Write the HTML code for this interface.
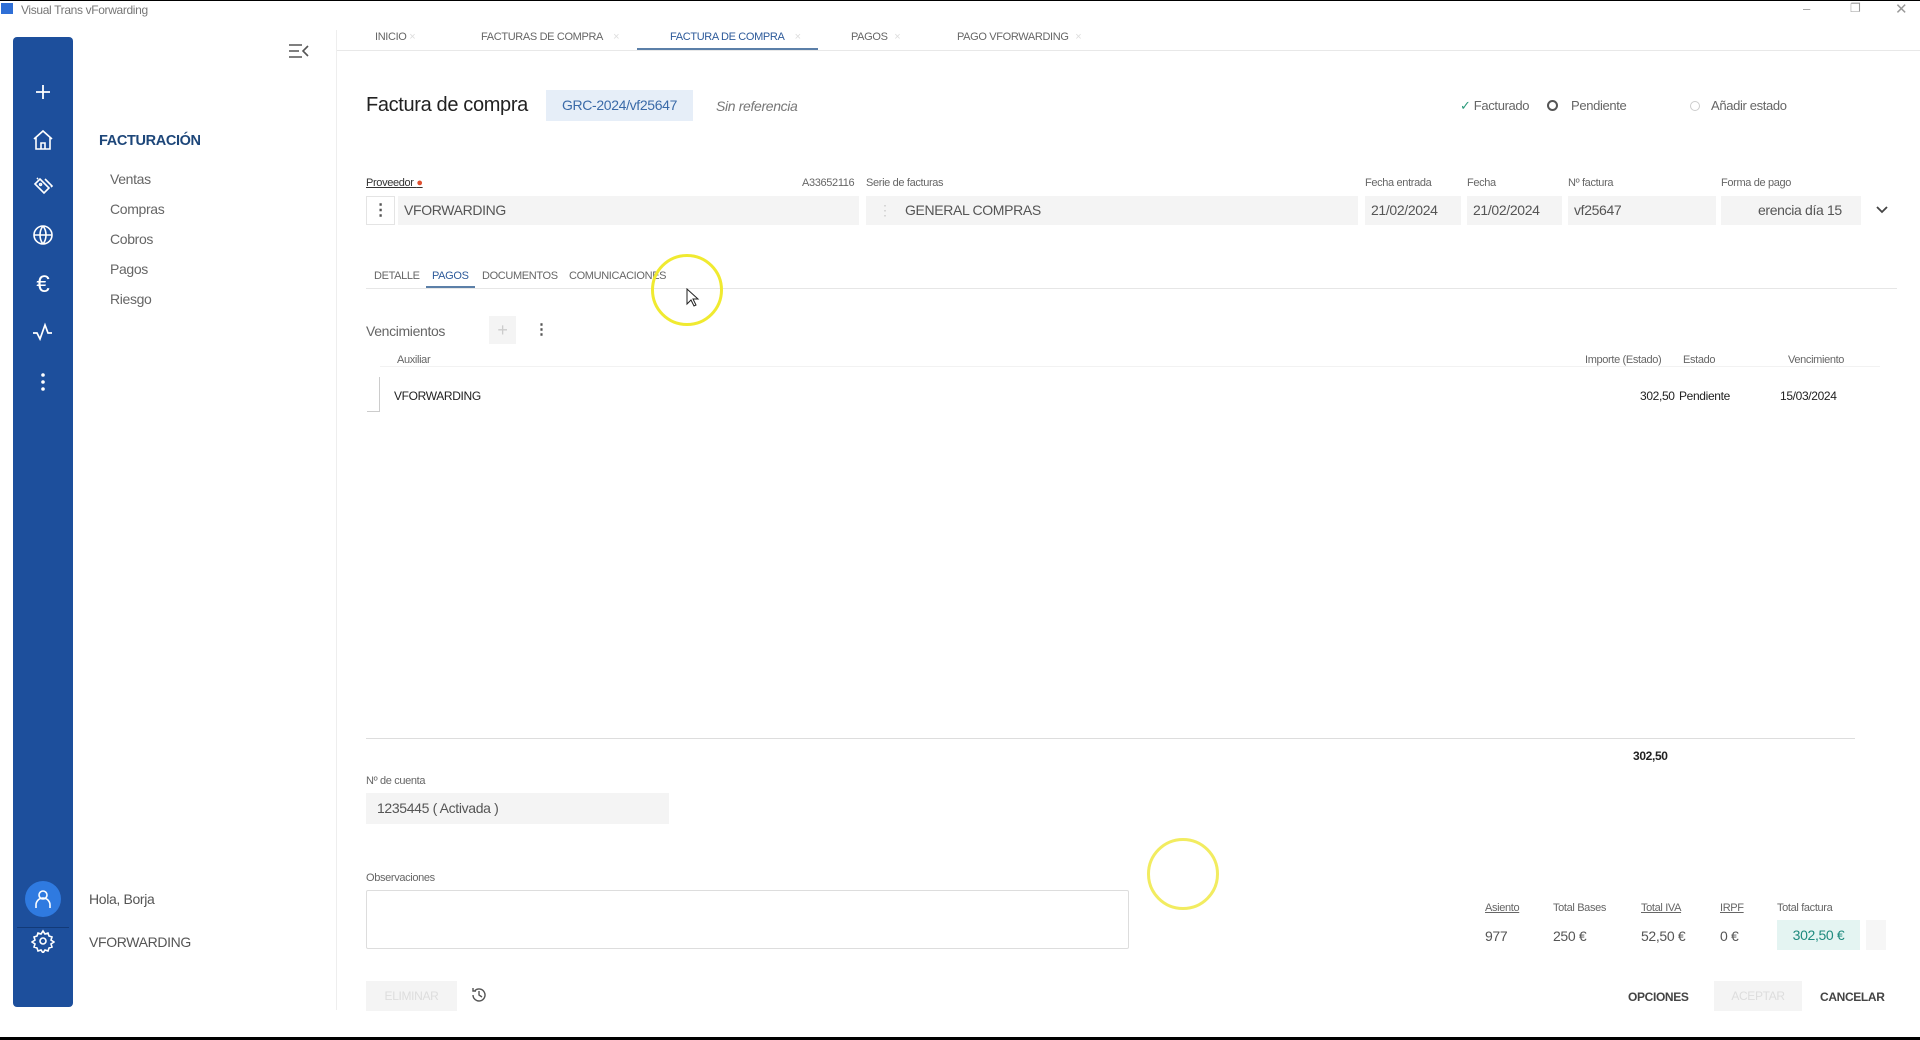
<!DOCTYPE html>
<html><head><meta charset="utf-8"><style>
*{margin:0;padding:0;box-sizing:border-box}
body{width:1920px;height:1040px;background:#fff;font-family:"Liberation Sans",sans-serif;color:#444;position:relative;overflow:hidden;letter-spacing:-0.35px}
.a{position:absolute;white-space:nowrap}
.side{left:13px;top:37px;width:60px;height:970px;background:#1d4f9c;border-radius:4px}
.ic{position:absolute;left:31px;width:24px;height:24px}
.t{font-size:12px;color:#666}
.lbl{font-size:11px;color:#666}
.inp{background:#f4f4f4;height:29px;top:196px;font-size:14px;color:#555;line-height:29px;padding-left:6px}
</style></head><body>
<div class="a" style="left:0;top:0;width:1920px;height:1px;background:#000"></div>
<div class="a" style="left:0;top:1037px;width:1920px;height:3px;background:#000"></div>
<div class="a" style="left:1px;top:3px;width:12px;height:11px;background:#2f6fd6"></div>
<div class="a" style="left:21px;top:3px;font-size:12px;color:#777">Visual Trans vForwarding</div>
<div class="a" style="left:1803px;top:1px;font-size:13px;color:#999">–</div>
<div class="a" style="left:1850px;top:1px;font-size:12px;color:#999">❐</div>
<div class="a" style="left:1895px;top:0px;font-size:15px;color:#999">✕</div>

<div class="a side"></div>
<svg class="ic" style="top:80px" viewBox="0 0 24 24" fill="none" stroke="#fff" stroke-width="1.8"><path d="M12 5v14M5 12h14"/></svg>
<svg class="ic" style="top:128px" viewBox="0 0 24 24" fill="none" stroke="#fff" stroke-width="1.6"><path d="M3 11L12 3l9 8M5 9.5V21h14V9.5M10 21v-6h4v6"/></svg>
<svg class="ic" style="top:175px" viewBox="0 0 24 24" fill="none" stroke="#fff" stroke-width="1.6"><path d="M4 9l5-5 9 9-5 5-9-9zM6 4l1-1M9.5 8.5a1 1 0 1 0 .1 0M14 4l7 7-1 1"/></svg>
<svg class="ic" style="top:223px" viewBox="0 0 24 24" fill="none" stroke="#fff" stroke-width="1.6"><circle cx="12" cy="12" r="9"/><path d="M3 12h18M12 3c-4 5-4 13 0 18M12 3c4 5 4 13 0 18"/></svg>
<div class="a" style="left:31px;top:271px;width:24px;text-align:center;font-size:24px;color:#fff;letter-spacing:0;font-weight:300">€</div>
<svg class="ic" style="top:320px" viewBox="0 0 24 24" fill="none" stroke="#fff" stroke-width="1.7"><path d="M2 13h4l3 6 5-14 3 8h4"/></svg>
<svg class="ic" style="top:370px" viewBox="0 0 24 24" fill="#fff"><circle cx="12" cy="5" r="1.8"/><circle cx="12" cy="12" r="1.8"/><circle cx="12" cy="19" r="1.8"/></svg>
<div class="a" style="left:25px;top:881px;width:36px;height:36px;border-radius:50%;background:#2f7ae0"></div>
<svg class="ic" style="top:887px" viewBox="0 0 24 24" fill="none" stroke="#fff" stroke-width="1.6"><circle cx="12" cy="8" r="4"/><path d="M5 21v-3a5 5 0 0 1 14 0v3"/></svg>
<div class="a" style="left:17px;top:927px;width:52px;height:1px;background:#123a78"></div>
<svg class="ic" style="top:929px" viewBox="0 0 24 24" fill="none" stroke="#fff" stroke-width="1.6"><circle cx="12" cy="12" r="3"/><path d="M12 2l2 3 3-1 1 3 3 1-1 3 3 2-3 2 1 3-3 1-1 3-3-1-2 3-2-3-3 1-1-3-3-1 1-3-3-2 3-2-1-3 3-1 1-3 3 1z"/></svg>

<svg class="a" style="left:288px;top:42px" width="22" height="18" viewBox="0 0 22 18" fill="none" stroke="#555" stroke-width="1.6"><path d="M1 3h13M1 9h10M1 15h13M20 4l-5 5 5 5"/></svg>
<div class="a" style="left:99px;top:133px;font-size:14.5px;font-weight:bold;color:#1d4679">FACTURACIÓN</div>
<div class="a t" style="left:110px;top:171px;font-size:14px">Ventas</div>
<div class="a t" style="left:110px;top:201px;font-size:14px">Compras</div>
<div class="a t" style="left:110px;top:231px;font-size:14px">Cobros</div>
<div class="a t" style="left:110px;top:261px;font-size:14px">Pagos</div>
<div class="a t" style="left:110px;top:291px;font-size:14px">Riesgo</div>
<div class="a" style="left:89px;top:891px;font-size:14px;color:#555">Hola, Borja</div>
<div class="a" style="left:89px;top:934px;font-size:14px;color:#555">VFORWARDING</div>
<div class="a" style="left:336px;top:30px;width:1px;height:980px;background:#eee"></div>

<div class="a" style="left:337px;top:50px;width:1583px;height:1px;background:#e8e8e8"></div>
<div class="a t" style="left:375px;top:31px;font-size:11px">INICIO <span style="color:#ddd">×</span></div>
<div class="a t" style="left:481px;top:31px;font-size:11px">FACTURAS DE COMPRA <span style="color:#ddd;margin-left:8px">×</span></div>
<div class="a" style="left:670px;top:31px;font-size:11px;color:#2d5a9a">FACTURA DE COMPRA <span style="color:#ddd;margin-left:8px">×</span></div>
<div class="a" style="left:637px;top:48px;width:181px;height:2px;background:#5b7fa8"></div>
<div class="a t" style="left:851px;top:31px;font-size:11px">PAGOS <span style="color:#ddd;margin-left:4px">×</span></div>
<div class="a t" style="left:957px;top:31px;font-size:11px">PAGO VFORWARDING <span style="color:#ddd;margin-left:4px">×</span></div>

<div class="a" style="left:366px;top:94px;font-size:20px;color:#222">Factura de compra</div>
<div class="a" style="left:546px;top:90px;width:147px;height:31px;background:#e6eef8;color:#3a6aa8;font-size:14px;line-height:31px;text-align:center">GRC-2024/vf25647</div>
<div class="a" style="left:716px;top:98px;font-size:14px;font-style:italic;color:#777">Sin referencia</div>
<div class="a" style="left:1460px;top:98px;font-size:13px;color:#666"><span style="color:#2a9a7a">✓</span> Facturado</div>
<div class="a" style="left:1547px;top:100px;width:11px;height:11px;border:2px solid #555;border-radius:50%"></div>
<div class="a" style="left:1571px;top:98px;font-size:13px;color:#666">Pendiente</div>
<div class="a" style="left:1690px;top:101px;width:10px;height:10px;border:1px solid #ccc;border-radius:50%"></div>
<div class="a" style="left:1711px;top:98px;font-size:13px;color:#666">Añadir estado</div>

<div class="a lbl" style="left:366px;top:177px;color:#333;text-decoration:underline">Proveedor <span style="color:#e05030;text-decoration:none">●</span></div>
<div class="a lbl" style="left:802px;top:177px">A33652116</div>
<div class="a lbl" style="left:866px;top:177px">Serie de facturas</div>
<div class="a lbl" style="left:1365px;top:177px">Fecha entrada</div>
<div class="a lbl" style="left:1467px;top:177px">Fecha</div>
<div class="a lbl" style="left:1568px;top:177px">Nº factura</div>
<div class="a lbl" style="left:1721px;top:177px">Forma de pago</div>
<div class="a" style="left:366px;top:196px;width:29px;height:29px;border:1px solid #e4e4e4;text-align:center;line-height:27px;font-weight:bold;color:#555">⋮</div>
<div class="a inp" style="left:398px;width:461px">VFORWARDING</div>
<div class="a inp" style="left:866px;width:492px;padding-left:39px"><span style="position:absolute;left:12px;color:#ccc">⋮</span>GENERAL COMPRAS</div>
<div class="a inp" style="left:1365px;width:96px">21/02/2024</div>
<div class="a inp" style="left:1467px;width:95px">21/02/2024</div>
<div class="a inp" style="left:1568px;width:148px">vf25647</div>
<div class="a inp" style="left:1721px;width:140px;padding-left:37px">erencia día 15</div>
<svg class="a" style="left:1875px;top:204px" width="14" height="12" viewBox="0 0 14 12" fill="none" stroke="#444" stroke-width="1.8"><path d="M2 3l5 5 5-5"/></svg>

<div class="a t" style="left:374px;top:270px;font-size:11px">DETALLE</div>
<div class="a" style="left:432px;top:270px;font-size:11px;color:#2d5a9a">PAGOS</div>
<div class="a" style="left:426px;top:286px;width:49px;height:2px;background:#5b7fa8"></div>
<div class="a t" style="left:482px;top:270px;font-size:11px">DOCUMENTOS</div>
<div class="a t" style="left:569px;top:270px;font-size:11px">COMUNICACIONES</div>
<div class="a" style="left:366px;top:288px;width:1531px;height:1px;background:#e6e6e6"></div>
<div class="a" style="left:651px;top:254px;width:72px;height:72px;border:3px solid #f0ea30;border-radius:50%"></div>
<svg class="a" style="left:686px;top:288px" width="14" height="20" viewBox="0 0 14 20"><path d="M1 1v15l4-4 3 6 2-1-3-6h5z" fill="#fff" stroke="#222"/></svg>

<div class="a" style="left:366px;top:323px;font-size:14px;color:#666">Vencimientos</div>
<div class="a" style="left:489px;top:316px;width:27px;height:28px;background:#f4f4f4;color:#ccc;text-align:center;line-height:28px;font-size:18px">+</div>
<div class="a" style="left:534px;top:320px;font-weight:bold;color:#555;font-size:15px">⋮</div>
<div class="a lbl" style="left:397px;top:354px">Auxiliar</div>
<div class="a lbl" style="left:1585px;top:354px">Importe (Estado)</div>
<div class="a lbl" style="left:1683px;top:354px">Estado</div>
<div class="a lbl" style="left:1788px;top:354px">Vencimiento</div>
<div class="a" style="left:380px;top:366px;width:1500px;height:1px;background:#f2f2f2"></div>
<div class="a" style="left:379px;top:377px;width:1px;height:35px;background:#ccc"></div>
<div class="a" style="left:367px;top:411px;width:12px;height:1px;background:#ccc"></div>
<div class="a" style="left:394px;top:389px;font-size:12px;color:#222">VFORWARDING</div>
<div class="a" style="left:1640px;top:389px;font-size:12px;color:#222">302,50</div>
<div class="a" style="left:1679px;top:389px;font-size:12px;color:#222">Pendiente</div>
<div class="a" style="left:1780px;top:389px;font-size:12px;color:#222">15/03/2024</div>

<div class="a" style="left:366px;top:738px;width:1489px;height:1px;background:#ddd"></div>
<div class="a" style="left:1633px;top:749px;font-size:12px;color:#222;font-weight:bold">302,50</div>

<div class="a lbl" style="left:366px;top:775px">Nº de cuenta</div>
<div class="a" style="left:366px;top:793px;width:303px;height:31px;background:#f4f4f4;font-size:14px;color:#555;line-height:31px;padding-left:11px">1235445 ( Activada )</div>
<div class="a lbl" style="left:366px;top:872px">Observaciones</div>
<div class="a" style="left:366px;top:890px;width:763px;height:59px;border:1px solid #ddd;border-radius:2px"></div>
<div class="a" style="left:1147px;top:838px;width:72px;height:72px;border:3px solid #f2ec60;border-radius:50%"></div>

<div class="a lbl" style="left:1485px;top:902px;text-decoration:underline">Asiento</div>
<div class="a lbl" style="left:1553px;top:902px">Total Bases</div>
<div class="a lbl" style="left:1641px;top:902px;text-decoration:underline">Total IVA</div>
<div class="a lbl" style="left:1720px;top:902px;text-decoration:underline">IRPF</div>
<div class="a lbl" style="left:1777px;top:902px">Total factura</div>
<div class="a" style="left:1485px;top:928px;font-size:14px;color:#555">977</div>
<div class="a" style="left:1553px;top:928px;font-size:14px;color:#555">250 €</div>
<div class="a" style="left:1641px;top:928px;font-size:14px;color:#555">52,50 €</div>
<div class="a" style="left:1720px;top:928px;font-size:14px;color:#555">0 €</div>
<div class="a" style="left:1777px;top:920px;width:83px;height:30px;background:#e4f4f2;color:#1e8a7e;font-size:14px;line-height:30px;text-align:center">302,50 €</div>
<div class="a" style="left:1866px;top:920px;width:20px;height:30px;background:#f6f6f6"></div>

<div class="a" style="left:366px;top:981px;width:91px;height:30px;background:#f4f4f4;color:#ddd;font-size:12px;line-height:30px;text-align:center">ELIMINAR</div>
<svg class="a" style="left:470px;top:986px" width="18" height="18" viewBox="0 0 18 18" fill="none" stroke="#555" stroke-width="1.4"><path d="M3 9a6 6 0 1 0 2-4.5M3 2v3h3M9 5v4l3 2"/></svg>
<div class="a" style="left:1628px;top:990px;font-size:12px;color:#444;font-weight:bold">OPCIONES</div>
<div class="a" style="left:1714px;top:981px;width:88px;height:30px;background:#f4f4f4;color:#ddd;font-size:12px;line-height:30px;text-align:center">ACEPTAR</div>
<div class="a" style="left:1820px;top:990px;font-size:12px;color:#444;font-weight:bold">CANCELAR</div>
</body></html>
